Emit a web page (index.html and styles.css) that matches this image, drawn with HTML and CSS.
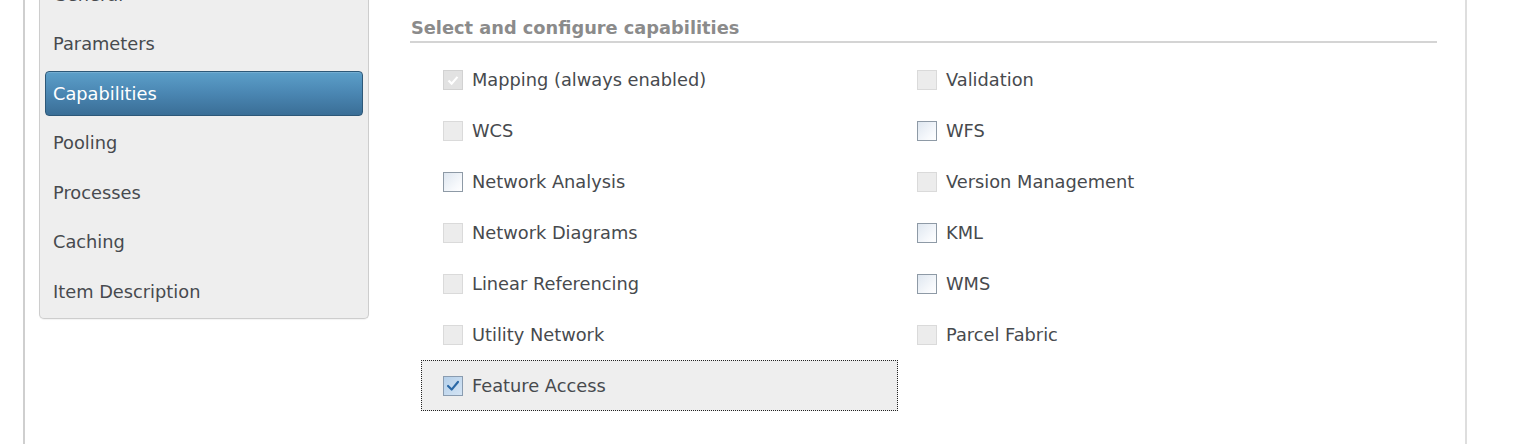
FILE: index.html
```html
<!DOCTYPE html>
<html>
<head>
<meta charset="utf-8">
<link rel="stylesheet" href="styles.css">
</head>
<body>
<div class="frame">
  <nav class="sidebar">
    <div class="nav-item">General</div>
    <div class="nav-item">Parameters</div>
    <div class="nav-item selected">Capabilities</div>
    <div class="nav-item">Pooling</div>
    <div class="nav-item">Processes</div>
    <div class="nav-item">Caching</div>
    <div class="nav-item">Item Description</div>
  </nav>
  <main class="content">
    <h2 class="section-title">Select and configure capabilities</h2>
    <div class="cap-grid">
      <label class="cap"><span class="box disabled checked"><svg viewBox="0 0 20 20"><path d="M5 10.5 L8.5 14 L15 6.5" /></svg></span>Mapping (always enabled)</label>
      <label class="cap"><span class="box disabled"></span>Validation</label>
      <label class="cap"><span class="box disabled"></span>WCS</label>
      <label class="cap"><span class="box enabled"></span>WFS</label>
      <label class="cap"><span class="box enabled"></span>Network Analysis</label>
      <label class="cap"><span class="box disabled"></span>Version Management</label>
      <label class="cap"><span class="box disabled"></span>Network Diagrams</label>
      <label class="cap"><span class="box enabled"></span>KML</label>
      <label class="cap"><span class="box disabled"></span>Linear Referencing</label>
      <label class="cap"><span class="box enabled"></span>WMS</label>
      <label class="cap"><span class="box disabled"></span>Utility Network</label>
      <label class="cap"><span class="box disabled"></span>Parcel Fabric</label>
      <label class="cap focused"><span class="box enabled checked"><svg viewBox="0 0 20 20"><path d="M4.5 10 L8.5 14 L15.5 5.5" /></svg></span>Feature Access</label>
    </div>
  </main>
</div>
</body>
</html>
```

FILE: styles.css
```css
html, body {
  margin: 0;
  padding: 0;
  background: #ffffff;
}
body {
  height: 444px;
  overflow: hidden;
  font-family: "DejaVu Sans", Verdana, sans-serif;
  font-size: 17.8px;
  color: #474a4e;
}
.frame {
  margin-left: 23px;
  width: 1426px;
  height: 460px;
  border-left: 2px solid #cfcfcf;
  border-right: 2px solid #dedede;
  display: flex;
  align-items: flex-start;
  padding-left: 14px;
  box-sizing: content-box;
}
.sidebar {
  flex: none;
  width: 330px;
  box-sizing: border-box;
  margin-top: -30.5px;
  padding-bottom: 2px;
  background: #eeeeee;
  border: 1px solid #cdcdcd;
  border-top: none;
  border-radius: 0 0 5px 5px;
  box-shadow: 0 1px 1px rgba(0,0,0,0.05);
}
.nav-item {
  height: 49.5px;
  display: flex;
  align-items: center;
  padding-left: 13px;
  color: #474a4e;
}
.nav-item.selected {
  height: 45px;
  box-sizing: border-box;
  margin: 2.25px 5px;
  padding-left: 7px;
  color: #ffffff;
  border: 1px solid #2d5878;
  border-radius: 4px;
  background: linear-gradient(#5c9fc9, #4a86b2 50%, #3a6e96);
  box-shadow: inset 0 1px 0 rgba(255,255,255,0.15);
}
.content {
  flex: 1;
  margin-left: 41px;
  margin-right: 28px;
}
.section-title {
  margin: 16px 0 0 0;
  padding: 0 0 2px 1px;
  font-size: 17.8px;
  line-height: 23px;
  font-weight: bold;
  color: #8b8b8b;
  border-bottom: 2px solid #d4d4d4;
}
.cap-grid {
  display: grid;
  grid-template-columns: 474px 474px;
  grid-auto-rows: 51px;
  margin: 11px 0 0 11px;
}
.cap {
  display: flex;
  align-items: center;
  padding-left: 22px;
  box-sizing: border-box;
}
.cap.focused {
  width: 477px;
  padding-left: 21px;
  background: #eeeeee;
  border: 1px dotted #222222;
}
.box {
  flex: none;
  width: 20px;
  height: 20px;
  box-sizing: border-box;
  margin-right: 9px;
  display: inline-flex;
}
.box svg {
  width: 18px;
  height: 18px;
  fill: none;
}
.box.disabled {
  background: #ececec;
  border: 1px solid #dadada;
}
.box.disabled.checked {
  background: #e2e2e2;
  border-color: #d2d2d2;
}
.box.disabled svg path {
  stroke: #ffffff;
  stroke-width: 2.4;
}
.box.enabled {
  border: 1px solid #8e9aa6;
  background: linear-gradient(135deg, #dfe7f0, #f7f9fc 70%, #ffffff);
}
.box.enabled.checked {
  border-color: #8a9cb0;
  background: linear-gradient(135deg, #b4cfe9, #d4e4f4);
}
.box.enabled.checked svg path {
  stroke: #2a68a6;
  stroke-width: 2.4;
  stroke-linecap: round;
  stroke-linejoin: round;
}
```
